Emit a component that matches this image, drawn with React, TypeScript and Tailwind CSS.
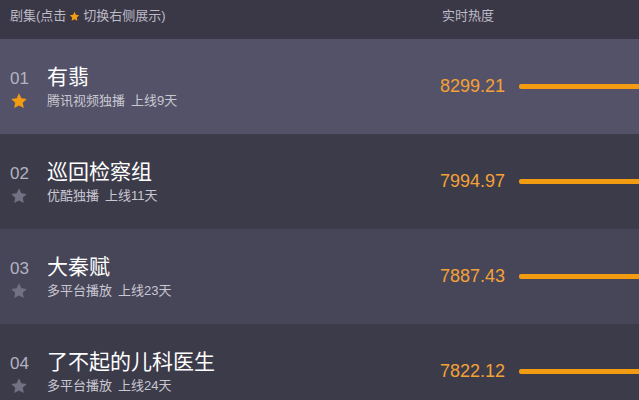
import React from "react";

const SHOWS = [
  { no: "01", title: "有翡", src: "腾讯视频独播", days: "上线9天", heat: "8299.21", on: true, bg: "bg-[#545268]" },
  { no: "02", title: "巡回检察组", src: "优酷独播", days: "上线11天", heat: "7994.97", on: false, bg: "bg-[#3c3b4a]" },
  { no: "03", title: "大秦赋", src: "多平台播放", days: "上线23天", heat: "7887.43", on: false, bg: "bg-[#474659]" },
  { no: "04", title: "了不起的儿科医生", src: "多平台播放", days: "上线24天", heat: "7822.12", on: false, bg: "bg-[#3c3b4a]" },
];

function Star({ className }: { className: string }) {
  return (
    <svg viewBox="0 0 24 24" className={className} fill="currentColor">
      <path d="M12 1.8l3.1 6.6 7.2.9-5.3 5 1.4 7.1L12 17.9l-6.4 3.5 1.4-7.1-5.3-5 7.2-.9z" />
    </svg>
  );
}

export default function App() {
  return (
    <div className="w-[639px] h-[400px] overflow-hidden bg-[#3c3b4a] font-['Liberation_Sans','Noto_Sans_CJK_SC',sans-serif]">
      {/* header */}
      <div className="h-[39px] flex items-start pt-[8px] bg-[#3a3846] text-[13px] leading-[16px] text-[#bcbbc6]">
        <div className="flex-1 pl-[10px] flex items-center">
          剧集(点击
          <Star className="w-[11px] h-[11px] mx-[3px] text-[#f39c12]" />
          切换右侧展示)
        </div>
        <div className="w-[197px]">实时热度</div>
      </div>

      {SHOWS.map((s) => (
        <div key={s.no} className={`h-[95px] flex items-center ${s.bg}`}>
          <div className="flex-1 pl-[10px] pt-[2px] grid grid-cols-[37px_1fr] items-baseline">
            <span className="text-[17px] leading-[24px] text-[#b3b2c2]">{s.no}</span>
            <span className="text-[21px] leading-[24px] text-white">{s.title}</span>
            <span className="self-center h-[20px] flex items-center">
              <Star className={`w-[18px] h-[18px] ${s.on ? "text-[#f39c12]" : "text-[#727184]"}`} />
            </span>
            <span className="text-[13px] leading-[20px] text-[#c9c8d2]">
              {s.src}
              <span className="ml-[6px]">{s.days}</span>
            </span>
          </div>
          <div className="w-[199px] flex items-center">
            <span className="w-[79px] text-[18px] text-[#f4a137]">{s.heat}</span>
            <div className="flex-1 h-[5px] rounded-l-[2px] bg-[#f39c12]" />
          </div>
        </div>
      ))}
    </div>
  );
}
